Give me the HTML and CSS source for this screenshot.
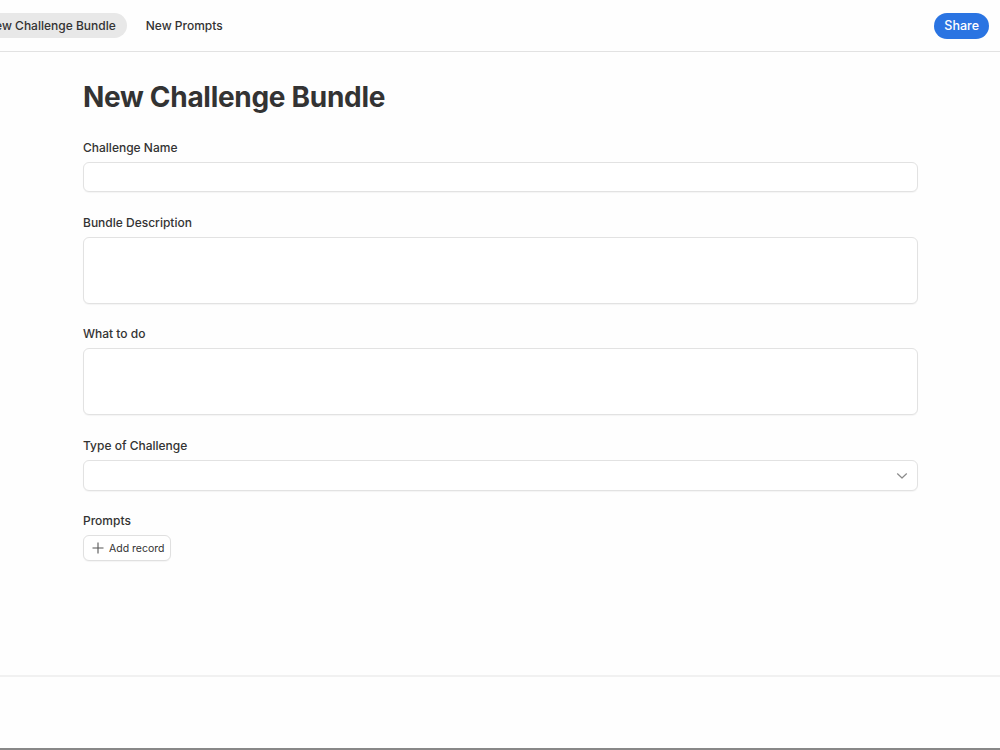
FILE: index.html
```html
<!DOCTYPE html>
<html>
<head>
<meta charset="utf-8">
<link rel="stylesheet" href="styles.css">
</head>
<body>
<header class="topbar">
  <nav class="tabs">
    <span class="tab tab-active">New Challenge Bundle</span>
    <span class="tab">New Prompts</span>
  </nav>
  <button class="share">Share</button>
</header>
<main class="page">
  <h1 class="title">New Challenge Bundle</h1>
  <div class="field">
    <label class="label">Challenge Name</label>
    <div class="input"></div>
  </div>
  <div class="field">
    <label class="label">Bundle Description</label>
    <div class="input textarea"></div>
  </div>
  <div class="field tight">
    <label class="label">What to do</label>
    <div class="input textarea"></div>
  </div>
  <div class="field">
    <label class="label">Type of Challenge</label>
    <div class="input select">
      <svg class="chevron" width="12" height="8" viewBox="0 0 12 8"><path d="M1.5 1.8 L6 6 L10.5 1.8" fill="none" stroke="#8a8a8a" stroke-width="1.2" stroke-linecap="round" stroke-linejoin="round"/></svg>
    </div>
  </div>
  <div class="field tight">
    <label class="label">Prompts</label>
    <div class="row">
      <button class="add">
        <svg width="12" height="12" viewBox="0 0 12 12"><path d="M6 0.5 V11.5 M0.5 6 H11.5" stroke="#555" stroke-width="1.1"/></svg>
        <span>Add record</span>
      </button>
    </div>
  </div>
</main>
<div class="footer-line"></div>
<div class="bottom-area"></div>
</body>
</html>
```
FILE: styles.css
```css
* { box-sizing: border-box; }
html, body { margin: 0; padding: 0; background: #fefefe; }
body {
  font-family: Inter, "Noto Sans", "Liberation Sans", sans-serif;
  color: #333;
  height: 750px;
  overflow: hidden;
  display: flex;
  flex-direction: column;
}
.topbar {
  height: 52px;
  flex: none;
  border-bottom: 1px solid #e2e2e2;
  display: flex;
  align-items: center;
  justify-content: space-between;
  padding: 0 11px 0 0;
}
.tabs {
  display: flex;
  align-items: center;
  gap: 8px;
  margin-left: -35px;
}
.tab {
  height: 25px;
  line-height: 25px;
  padding: 0 11px;
  border-radius: 13px;
  font-size: 12px;
  font-weight: 500;
  color: #333;
  white-space: nowrap;
}
.tab-active { background: #e8e8e8; padding: 0 11px 0 21px; }
.share {
  height: 26px;
  padding: 0 10px;
  border: none;
  border-radius: 13px;
  background: #2a74e2;
  color: #fff;
  font-family: inherit;
  font-size: 12.5px;
  font-weight: 500;
}
.page {
  flex: none;
  width: 835px;
  margin-left: 83px;
  padding-top: 26px;
  display: flex;
  flex-direction: column;
  gap: 23px;
  height: 623px;
}
.title {
  margin: 0 0 1px 0;
  font-size: 28px;
  line-height: 38px;
  font-weight: 700;
  letter-spacing: -0.3px;
  color: #333;
}
.field {
  display: flex;
  flex-direction: column;
  gap: 6px;
}
.field.tight { margin-top: -1px; }
.label {
  font-size: 12px;
  line-height: 16px;
  font-weight: 500;
  color: #333;
}
.input {
  height: 30px;
  border: 1px solid #e2e2e2;
  border-radius: 6px;
  background: #fff;
  box-shadow: 0 1px 1px rgba(0,0,0,0.04);
}
.textarea { height: 67px; }
.select {
  height: 31px;
  display: flex;
  align-items: center;
  justify-content: flex-end;
  padding-right: 9px;
}
.row { display: flex; }
.add {
  display: flex;
  align-items: center;
  gap: 5px;
  height: 26px;
  padding: 0 6px 0 8px;
  border: 1px solid #e0e0e0;
  border-radius: 6px;
  background: #fff;
  box-shadow: 0 1px 1px rgba(0,0,0,0.04);
  font-family: inherit;
  font-size: 10.5px;
  color: #333;
}
.footer-line {
  flex: none;
  height: 2px;
  background: #f1f1f1;
}
.bottom-area {
  flex: 1;
  border-bottom: 2px solid #888;
}
```
